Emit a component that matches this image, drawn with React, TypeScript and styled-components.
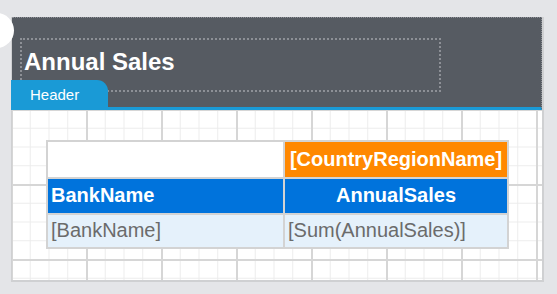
import React from "react";
import styled, { createGlobalStyle } from "styled-components";

const Global = createGlobalStyle`
  html, body { margin: 0; padding: 0; background: #e4e5e8; }
  body { font-family: "Liberation Sans", Arial, sans-serif; }
  * { box-sizing: border-box; }
`;

const Viewport = styled.div`
  position: relative;
  width: 557px;
  height: 294px;
  overflow: hidden;
  padding: 17px 0 0 11px;
  background: #e4e5e8;
`;

const Handle = styled.div`
  position: absolute;
  left: -21px;
  top: 13px;
  width: 35px;
  height: 35px;
  border-radius: 50%;
  background: #ffffff;
`;

const Surface = styled.div`
  width: 533px;
  height: 265px;
  display: flex;
  flex-direction: column;
  background: #ffffff;
  border-left: 1px solid #cfd0d2;
  border-right: 2px solid #cfd0d2;
  border-bottom: 2px solid #cfd0d2;
`;

const Band = styled.div`
  position: relative;
  height: 93px;
  flex: none;
  background: #565b62;
  border-top: 1px dotted #8d9096;
  border-right: 1px dotted #8d9096;
  border-bottom: 3px solid #1a9ad6;
  padding: 20px 0 0 8px;
`;

const TitleBox = styled.div`
  width: 421px;
  height: 54px;
  border: 2px dotted #8d9096;
  display: flex;
  align-items: center;
  padding: 0 0 7px 2px;
`;

const Title = styled.span`
  color: #ffffff;
  font-weight: bold;
  font-size: 24px;
`;

const Tab = styled.div`
  position: absolute;
  left: -1px;
  bottom: -3px;
  width: 97px;
  height: 30px;
  background: #1a9ad6;
  border-top-right-radius: 11px;
  color: #ffffff;
  font-size: 15px;
  padding: 6px 0 0 19px;
`;

const GridArea = styled.div`
  flex: 1;
  padding: 30px 0 0 34px;
  background-color: #ffffff;
  background-image:
    linear-gradient(to right, #d6d6d6 2px, transparent 2px),
    linear-gradient(to bottom, #d6d6d6 2px, transparent 2px),
    linear-gradient(to right, #ececec 1px, transparent 1px),
    linear-gradient(to bottom, #ececec 1px, transparent 1px);
  background-size: 75px 75px, 75px 75px, 18.75px 18.75px, 18.75px 18.75px;
  background-position: -1px -1px, -1px -1px, -1px -1px, -1px -1px;
`;

const Table = styled.div`
  display: grid;
  grid-template-columns: 235px 222px;
  grid-template-rows: 35px 34px 32px;
  gap: 2px;
  padding: 2px;
  width: 463px;
  background: #d3d3d3;
`;

type Tone = "blank" | "orange" | "blue" | "data";

const toneBg: Record<Tone, string> = {
  blank: "#ffffff",
  orange: "#ff8800",
  blue: "#0073dc",
  data: "#e5f1fb",
};

const Cell = styled.div<{ $tone: Tone; $center?: boolean }>`
  background: ${(p) => toneBg[p.$tone]};
  color: ${(p) => (p.$tone === "data" ? "#6b6b6b" : "#ffffff")};
  font-weight: ${(p) => (p.$tone === "data" ? "normal" : "bold")};
  font-size: 20px;
  display: flex;
  align-items: center;
  justify-content: ${(p) => (p.$center ? "center" : "flex-start")};
  padding: ${(p) => (p.$center ? "0 0 1px 0" : "0 0 1px 3px")};
  white-space: nowrap;
`;

export default function App() {
  return (
    <>
      <Global />
      <Viewport>
        <Surface>
          <Band>
            <TitleBox>
              <Title>Annual Sales</Title>
            </TitleBox>
            <Tab>Header</Tab>
          </Band>
          <GridArea>
            <Table>
              <Cell $tone="blank" />
              <Cell $tone="orange" $center>[CountryRegionName]</Cell>
              <Cell $tone="blue">BankName</Cell>
              <Cell $tone="blue" $center>AnnualSales</Cell>
              <Cell $tone="data">[BankName]</Cell>
              <Cell $tone="data">[Sum(AnnualSales)]</Cell>
            </Table>
          </GridArea>
        </Surface>
        <Handle />
      </Viewport>
    </>
  );
}
